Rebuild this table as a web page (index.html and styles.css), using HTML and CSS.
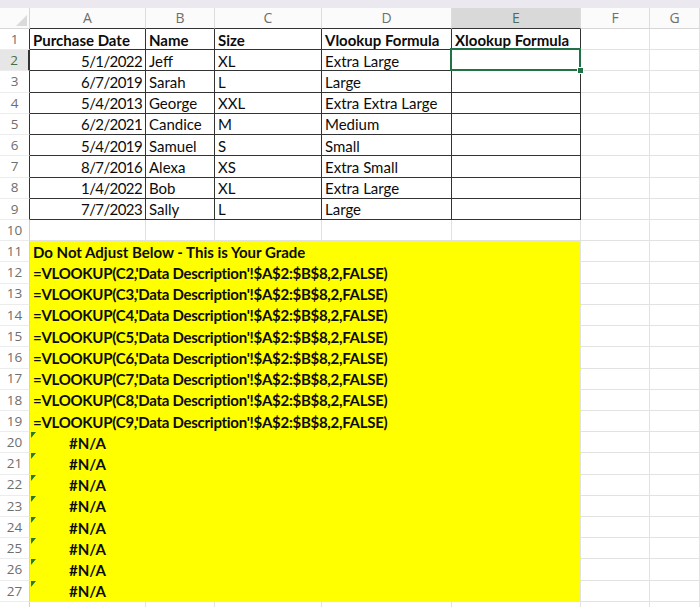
FILE: index.html
```html
<!DOCTYPE html>
<html>
<head>
<meta charset="utf-8">
<link rel="stylesheet" href="styles.css">
</head>
<body>
<div class="topbar"></div>
<div class="sheet">
  <div class="c corner"></div><div class="c h tb">A</div><div class="c h tb">B</div><div class="c h tb">C</div><div class="c h tb">D</div><div class="c h tb hsel">E</div><div class="c h">F</div><div class="c h">G</div>

  <div class="c r tr">1</div><div class="c t b">Purchase Date</div><div class="c t b">Name</div><div class="c t b">Size</div><div class="c t b">Vlookup Formula</div><div class="c t b">Xlookup Formula</div><div class="c"></div><div class="c"></div>
  <div class="c r tr rsel">2</div><div class="c t ra date">5/1/2022</div><div class="c t">Jeff</div><div class="c t">XL</div><div class="c t">Extra Large</div><div class="c t sel"></div><div class="c"></div><div class="c"></div>
  <div class="c r tr">3</div><div class="c t ra date">6/7/2019</div><div class="c t">Sarah</div><div class="c t">L</div><div class="c t">Large</div><div class="c t"></div><div class="c"></div><div class="c"></div>
  <div class="c r tr">4</div><div class="c t ra date">5/4/2013</div><div class="c t">George</div><div class="c t">XXL</div><div class="c t">Extra Extra Large</div><div class="c t"></div><div class="c"></div><div class="c"></div>
  <div class="c r tr">5</div><div class="c t ra date">6/2/2021</div><div class="c t">Candice</div><div class="c t">M</div><div class="c t">Medium</div><div class="c t"></div><div class="c"></div><div class="c"></div>
  <div class="c r tr">6</div><div class="c t ra date">5/4/2019</div><div class="c t">Samuel</div><div class="c t">S</div><div class="c t">Small</div><div class="c t"></div><div class="c"></div><div class="c"></div>
  <div class="c r tr">7</div><div class="c t ra date">8/7/2016</div><div class="c t">Alexa</div><div class="c t">XS</div><div class="c t">Extra Small</div><div class="c t"></div><div class="c"></div><div class="c"></div>
  <div class="c r tr">8</div><div class="c t ra date">1/4/2022</div><div class="c t">Bob</div><div class="c t">XL</div><div class="c t">Extra Large</div><div class="c t"></div><div class="c"></div><div class="c"></div>
  <div class="c r tr">9</div><div class="c t ra date">7/7/2023</div><div class="c t">Sally</div><div class="c t">L</div><div class="c t">Large</div><div class="c t"></div><div class="c"></div><div class="c"></div>
  <div class="c r">10</div><div class="c"></div><div class="c"></div><div class="c"></div><div class="c"></div><div class="c"></div><div class="c"></div><div class="c"></div>

  <div class="c r">11</div><div class="c y b span5">Do Not Adjust Below - This is Your Grade</div><div class="c"></div><div class="c"></div>
  <div class="c r">12</div><div class="c y b span5 fx">=VLOOKUP(C2,'Data Description'!$A$2:$B$8,2,FALSE)</div><div class="c"></div><div class="c"></div>
  <div class="c r">13</div><div class="c y b span5 fx">=VLOOKUP(C3,'Data Description'!$A$2:$B$8,2,FALSE)</div><div class="c"></div><div class="c"></div>
  <div class="c r">14</div><div class="c y b span5 fx">=VLOOKUP(C4,'Data Description'!$A$2:$B$8,2,FALSE)</div><div class="c"></div><div class="c"></div>
  <div class="c r">15</div><div class="c y b span5 fx">=VLOOKUP(C5,'Data Description'!$A$2:$B$8,2,FALSE)</div><div class="c"></div><div class="c"></div>
  <div class="c r">16</div><div class="c y b span5 fx">=VLOOKUP(C6,'Data Description'!$A$2:$B$8,2,FALSE)</div><div class="c"></div><div class="c"></div>
  <div class="c r">17</div><div class="c y b span5 fx">=VLOOKUP(C7,'Data Description'!$A$2:$B$8,2,FALSE)</div><div class="c"></div><div class="c"></div>
  <div class="c r">18</div><div class="c y b span5 fx">=VLOOKUP(C8,'Data Description'!$A$2:$B$8,2,FALSE)</div><div class="c"></div><div class="c"></div>
  <div class="c r">19</div><div class="c y b span5 fx">=VLOOKUP(C9,'Data Description'!$A$2:$B$8,2,FALSE)</div><div class="c"></div><div class="c"></div>

  <div class="c r">20</div><div class="c y b ca err">#N/A</div><div class="c y span4"></div><div class="c"></div><div class="c"></div>
  <div class="c r">21</div><div class="c y b ca err">#N/A</div><div class="c y span4"></div><div class="c"></div><div class="c"></div>
  <div class="c r">22</div><div class="c y b ca err">#N/A</div><div class="c y span4"></div><div class="c"></div><div class="c"></div>
  <div class="c r">23</div><div class="c y b ca err">#N/A</div><div class="c y span4"></div><div class="c"></div><div class="c"></div>
  <div class="c r">24</div><div class="c y b ca err">#N/A</div><div class="c y span4"></div><div class="c"></div><div class="c"></div>
  <div class="c r">25</div><div class="c y b ca err">#N/A</div><div class="c y span4"></div><div class="c"></div><div class="c"></div>
  <div class="c r">26</div><div class="c y b ca err">#N/A</div><div class="c y span4"></div><div class="c"></div><div class="c"></div>
  <div class="c r">27</div><div class="c y b ca err">#N/A</div><div class="c y span4"></div><div class="c"></div><div class="c"></div>

  <div class="c r"></div><div class="c"></div><div class="c"></div><div class="c"></div><div class="c"></div><div class="c"></div><div class="c"></div><div class="c"></div>
</div>
</body>
</html>
```

FILE: styles.css
```css
html, body {
  margin: 0;
  padding: 0;
  background: #ffffff;
  overflow: hidden;
}

body {
  font-family: Lato, "Liberation Sans", sans-serif;
}

.topbar {
  height: 8px;
  background: #ece8f0;
}

.sheet {
  display: grid;
  grid-template-columns: 30px 116px 69px 107px 130px 129px 69px 50px;
  grid-template-rows: 21px repeat(28, 21.22px);
}

.c {
  box-sizing: border-box;
  border-right: 1px solid #e2e2e2;
  border-bottom: 1px solid #e2e2e2;
  font-size: 15px;
  color: #0c0c0c;
  padding: 2px 3px 0 3px;
  white-space: nowrap;
  overflow: hidden;
  display: flex;
  align-items: center;
  line-height: 1;
}

.h {
  font-family: "Open Sans", sans-serif;
  font-size: 14px;
  color: #6e6e6e;
  justify-content: center;
  background: #fbfbfb;
  border-right-color: #dcdcdc;
  border-bottom-color: #d6d6d6;
  padding: 0;
}

.hsel {
  background: #d9d9d9;
  color: #4a6e57;
}

.corner {
  position: relative;
  background: #fbfbfb;
  border-right-color: #d6d6d6;
  border-bottom-color: #d6d6d6;
}

.corner::after {
  content: "";
  position: absolute;
  right: 2px;
  bottom: 2px;
  width: 0;
  height: 0;
  border-bottom: 11px solid #dadada;
  border-left: 11px solid transparent;
}

.r {
  font-family: "Open Sans", sans-serif;
  font-size: 13.5px;
  color: #6e6e6e;
  justify-content: center;
  background: #ffffff;
  border-right-color: #d0d0d0;
  border-bottom-color: #ececec;
  padding: 1px 0 0 0;
}

.rsel {
  background: #e6e6e6;
  color: #3f6f4f;
  border-right: 2px solid #217346;
}

.tb {
  border-bottom-color: #333333;
}

.tr {
  border-right-color: #333333;
}

.t {
  border-right-color: #333333;
  border-bottom-color: #333333;
}

.b {
  font-weight: 700;
}

.ra {
  justify-content: flex-end;
}

.ca {
  justify-content: center;
}

.date {
  letter-spacing: -0.6px;
}

.fx {
  letter-spacing: -0.28px;
}

.y {
  background: #ffff00;
  border-bottom-color: #ffff00;
  border-right-color: #ffff00;
}

.span5 {
  grid-column: span 5;
  border-right-color: #e2e2e2;
}

.span4 {
  grid-column: span 4;
  border-right-color: #e2e2e2;
}

.err {
  position: relative;
}

.err::before {
  content: "";
  position: absolute;
  left: 1px;
  top: 0;
  width: 0;
  height: 0;
  border-top: 6px solid #1f7a2e;
  border-right: 5px solid transparent;
}

.sel {
  position: relative;
  overflow: visible;
}

.sel::after {
  content: "";
  position: absolute;
  left: -2px;
  top: -2px;
  right: -1px;
  bottom: -1px;
  border: 2px solid #217346;
}

.sel::before {
  content: "";
  position: absolute;
  right: -4px;
  bottom: -4px;
  width: 5px;
  height: 5px;
  background: #217346;
  border: 1px solid #ffffff;
  z-index: 1;
}
```
